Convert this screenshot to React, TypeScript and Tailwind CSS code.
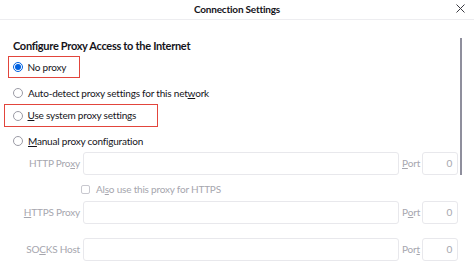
import React from "react";

function Radio({ checked }: { checked?: boolean }) {
  return checked ? (
    <span className="flex h-[10px] w-[10px] shrink-0 items-center justify-center rounded-full border-[1px] border-[#0061e0] bg-white">
      <span className="h-[6px] w-[6px] rounded-full bg-[#0061e0]" />
    </span>
  ) : (
    <span className="h-[10px] w-[10px] shrink-0 rounded-full border-[1px] border-[#9b9ba5] bg-white" />
  );
}

function U({ children }: { children: React.ReactNode }) {
  return <span className="underline underline-offset-[1px]">{children}</span>;
}

function ProxyRow({
  label,
  port,
  className,
}: {
  label: React.ReactNode;
  port: React.ReactNode;
  className?: string;
}) {
  return (
    <div className={"flex h-[23px] items-stretch text-[#a6a6ae] " + (className ?? "")}>
      <span className="flex w-[67px] items-center justify-end whitespace-nowrap">{label}</span>
      <div className="ml-[3px] w-[316px] rounded-[3px] border border-[#e8e8ec]" />
      <span className="ml-[3px] flex w-[17px] items-center">{port}</span>
      <div className="ml-[3px] flex w-[36px] items-center justify-end rounded-[3px] border border-[#e8e8ec] pr-[5px]">
        0
      </div>
    </div>
  );
}

export default function App() {
  return (
    <div className="relative h-[266px] w-[474px] overflow-hidden bg-white font-['Lato',sans-serif] text-[10px] tracking-[-0.2px] text-[#15141a]">
      <header className="relative flex h-[20px] items-center justify-center border-b border-[#ededf0]">
        <span className="text-[10px] font-bold">Connection Settings</span>
        <svg
          className="absolute right-[9px] top-[4px]"
          width="9"
          height="9"
          viewBox="0 0 9 9"
          fill="none"
          stroke="#3a3a42"
          strokeWidth="1"
        >
          <path d="M0.5 0.5L8.5 8.5M8.5 0.5L0.5 8.5" />
        </svg>
      </header>

      <div className="absolute left-[460px] top-[38px] h-[137px] w-[2px] bg-[#8f8f9d]" />

      <main className="pl-[13px] pt-[18px]">
        <h2 className="h-[16px] whitespace-nowrap text-[11px] font-bold leading-[16px] tracking-[-0.3px]">
          Configure Proxy Access to the Internet
        </h2>

        <div className="-ml-[5px] mt-[2px] flex h-[22px] w-[72px] items-center gap-[5px] whitespace-nowrap border-[1.5px] border-[#e2453c] pl-[3.5px]">
          <Radio checked />
          <span>No proxy</span>
        </div>

        <div className="mt-[4px] flex h-[22px] items-center gap-[5px] whitespace-nowrap">
          <Radio />
          <span>
            Auto-detect proxy settings for this net<U>w</U>ork
          </span>
        </div>

        <div className="-ml-[9px] flex h-[23px] w-[154px] items-center gap-[5px] whitespace-nowrap border-[1.5px] border-[#e2453c] pl-[7.5px]">
          <Radio />
          <span>
            <U>U</U>se system proxy settings
          </span>
        </div>

        <div className="mt-[4px] flex h-[20px] items-center gap-[5px] whitespace-nowrap">
          <Radio />
          <span>
            <U>M</U>anual proxy configuration
          </span>
        </div>

        <ProxyRow
          className="mt-[1px]"
          label={
            <>
              HTTP Pro<U>x</U>y
            </>
          }
          port={
            <>
              <U>P</U>ort
            </>
          }
        />

        <div className="ml-[68px] mt-[2px] flex h-[24px] items-center gap-[6px] whitespace-nowrap text-[#a6a6ae]">
          <span className="h-[9px] w-[9px] rounded-[2px] border border-[#c8c8cf]" />
          <span>
            Al<U>s</U>o use this proxy for HTTPS
          </span>
        </div>

        <ProxyRow
          label={
            <>
              <U>H</U>TTPS Proxy
            </>
          }
          port={
            <>
              P<U>o</U>rt
            </>
          }
        />

        <ProxyRow
          className="mt-[14px]"
          label={
            <>
              SO<U>C</U>KS Host
            </>
          }
          port={
            <>
              Por<U>t</U>
            </>
          }
        />
      </main>
    </div>
  );
}
